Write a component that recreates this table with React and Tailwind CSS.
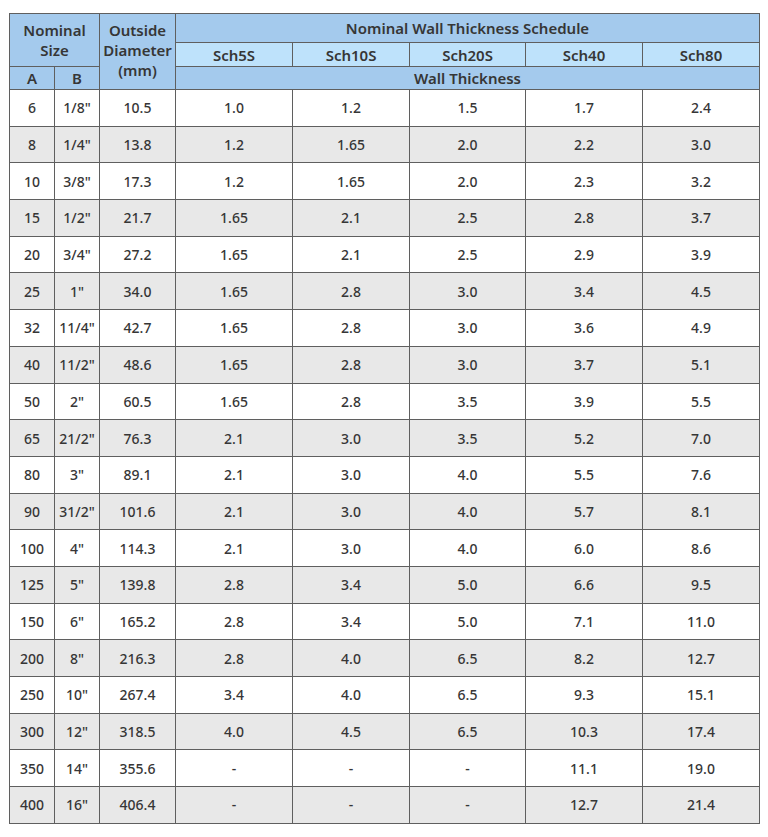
import React from 'react'

const rows = [
  ['6', '1/8"', '10.5', '1.0', '1.2', '1.5', '1.7', '2.4'],
  ['8', '1/4"', '13.8', '1.2', '1.65', '2.0', '2.2', '3.0'],
  ['10', '3/8"', '17.3', '1.2', '1.65', '2.0', '2.3', '3.2'],
  ['15', '1/2"', '21.7', '1.65', '2.1', '2.5', '2.8', '3.7'],
  ['20', '3/4"', '27.2', '1.65', '2.1', '2.5', '2.9', '3.9'],
  ['25', '1"', '34.0', '1.65', '2.8', '3.0', '3.4', '4.5'],
  ['32', '11/4"', '42.7', '1.65', '2.8', '3.0', '3.6', '4.9'],
  ['40', '11/2"', '48.6', '1.65', '2.8', '3.0', '3.7', '5.1'],
  ['50', '2"', '60.5', '1.65', '2.8', '3.5', '3.9', '5.5'],
  ['65', '21/2"', '76.3', '2.1', '3.0', '3.5', '5.2', '7.0'],
  ['80', '3"', '89.1', '2.1', '3.0', '4.0', '5.5', '7.6'],
  ['90', '31/2"', '101.6', '2.1', '3.0', '4.0', '5.7', '8.1'],
  ['100', '4"', '114.3', '2.1', '3.0', '4.0', '6.0', '8.6'],
  ['125', '5"', '139.8', '2.8', '3.4', '5.0', '6.6', '9.5'],
  ['150', '6"', '165.2', '2.8', '3.4', '5.0', '7.1', '11.0'],
  ['200', '8"', '216.3', '2.8', '4.0', '6.5', '8.2', '12.7'],
  ['250', '10"', '267.4', '3.4', '4.0', '6.5', '9.3', '15.1'],
  ['300', '12"', '318.5', '4.0', '4.5', '6.5', '10.3', '17.4'],
  ['350', '14"', '355.6', '-', '-', '-', '11.1', '19.0'],
  ['400', '16"', '406.4', '-', '-', '-', '12.7', '21.4'],
]

const schedules = ['Sch5S', 'Sch10S', 'Sch20S', 'Sch40', 'Sch80']

const cell = 'border border-[#5f5f5f] text-center align-middle p-0'

export default function App() {
  return (
    <div className="bg-white w-[768px] h-[837px] pt-[13px] pl-[9px]" style={{ fontFamily: '"Noto Sans", sans-serif' }}>
      <table className="table-fixed border-collapse w-[750px] text-[#363636]">
        <colgroup>
          <col className="w-[45px]" />
          <col className="w-[45px]" />
          <col className="w-[76px]" />
          <col className="w-[117px]" />
          <col className="w-[117px]" />
          <col className="w-[116px]" />
          <col className="w-[117px]" />
          <col className="w-[117px]" />
        </colgroup>
        <thead className="text-[15px] font-semibold leading-[20px]">
          <tr className="h-[29px] bg-[#a4caed]">
            <td rowSpan={2} colSpan={2} className={cell}>Nominal<br />Size</td>
            <td rowSpan={3} className={`${cell} align-top pt-[6px]`}>Outside<br />Diameter<br />(mm)</td>
            <td colSpan={5} className={cell}>Nominal Wall Thickness Schedule</td>
          </tr>
          <tr className="h-[24px]">
            {schedules.map(s => (
              <td key={s} className={`${cell} bg-[#bee2fb]`}>{s}</td>
            ))}
          </tr>
          <tr className="h-[23px] bg-[#a4caed]">
            <td className={cell}>A</td>
            <td className={cell}>B</td>
            <td colSpan={5} className={cell}>Wall Thickness</td>
          </tr>
        </thead>
        <tbody className="text-[14px] font-medium">
          {rows.map((r, i) => (
            <tr key={r[0]} className={`h-[36.7px] ${i % 2 ? 'bg-[#e8e8e8]' : 'bg-white'}`}>
              {r.map((v, j) => (
                <td key={j} className={cell}>{v}</td>
              ))}
            </tr>
          ))}
        </tbody>
      </table>
    </div>
  )
}
